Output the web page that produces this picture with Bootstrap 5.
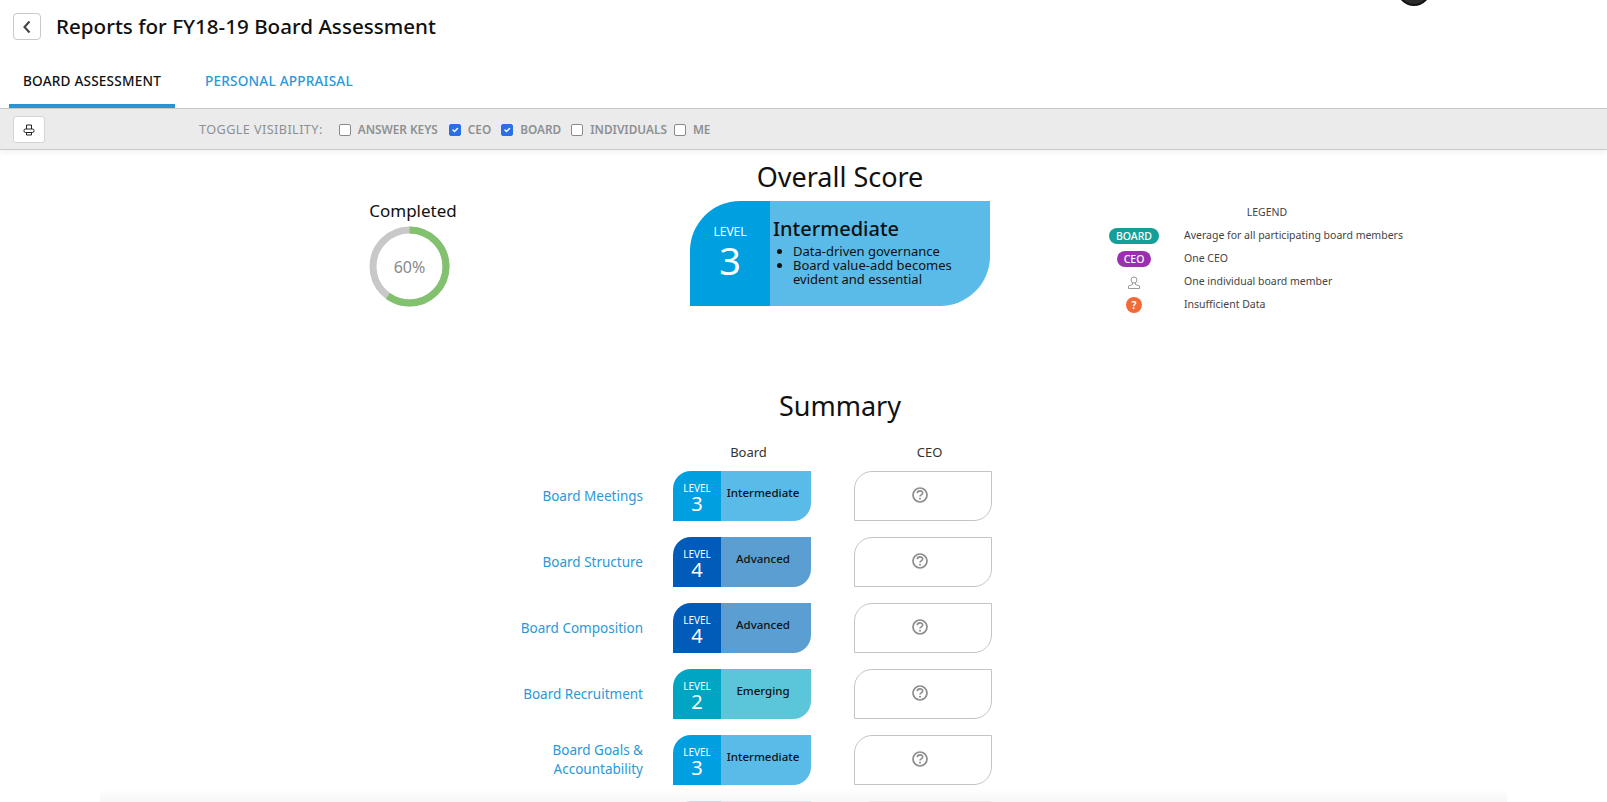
<!DOCTYPE html>
<html lang="en">
<head>
    <meta charset="UTF-8">
    <title>Reports for FY18-19 Board Assessment</title>
    <link href="https://cdn.jsdelivr.net/npm/bootstrap@5.3.0/dist/css/bootstrap.min.css" rel="stylesheet">
    <style>
        html, body { height: 802px; overflow: hidden; }
        body { font-family: "Noto Sans", "Liberation Sans", sans-serif; color: #111; background: #fff; }
        .page-head { height: 53px; padding: 13px 0 0 13px; }
        .back-btn { width: 28px; height: 27px; padding: 0; border: 1px solid #c9c9c9; border-radius: 4px; background: #fff; }
        .page-title { font-size: 20.6px; font-weight: 500; margin: 0 0 0 15px; line-height: 27px; }
        .avatar { width: 34px; height: 34px; margin: -41px 176px 0 auto; border-radius: 50%; background: #2c2c2c; border: 2px solid #111; }
        .tabs { height: 55px; padding-left: 9px; }
        .tabs .nav-link { height: 55px; padding: 18px 14px 0; font-size: 13.6px; font-weight: 500; letter-spacing: .2px; color: #2b98d8; border-bottom: 4px solid transparent; white-space: nowrap; }
        .tabs .nav-link.active { color: #111; border-bottom-color: #2b94d4; width: 166px; margin-right: 16px; padding-left: 0; padding-right: 0; }
        .toolbar { height: 42px; padding: 1px 0 0 13px; background: #ebebeb; border-top: 1px solid #c9c9c9; border-bottom: 1px solid #c9c9c9; box-shadow: 0 3px 6px rgba(0,0,0,.05); }
        .print-btn { width: 32px; height: 27px; padding: 0; border: 1px solid #d4d4d4; border-radius: 3px; background: #fff; }
        .toggle-label { margin-left: 154px; margin-right: 16px; font-size: 12.7px; letter-spacing: .4px; color: #8d9093; }
        .toolbar .form-check { min-height: 0; margin: 0 10px 0 0; padding: 0; display: flex; align-items: center; }
        .toolbar .form-check.gap-wide { margin-right: 11px; }
        .toolbar .form-check.gap-tight { margin-right: 7px; }
        .toolbar .form-check-input { float: none; width: 12px; height: 12px; margin: 0 7px 0 0; border-color: #8a8a8a; border-radius: 2px; }
        .toolbar .form-check-input:checked { background-color: #2a6fe8; border-color: #2a6fe8; }
        .toolbar .form-check-label { font-size: 11.8px; font-weight: 600; color: #8d9093; }
        .overview { height: 238px; }
        .section-title { font-size: 27px; font-weight: 400; line-height: 36px; text-align: center; margin: 0; }
        .summary-title { padding-left: 73px; }
        .completed { width: 100px; margin-left: 363px; padding-top: 48px; text-align: center; font-size: 17px; }
        .ring { display: block; width: 81px; height: 81px; margin: 2px 0 0 6px; }
        .overall { width: 300px; margin-left: 227px; padding-top: 9px; }
        .score { display: flex; height: 105px; margin-top: 6px; border-top-left-radius: 50px; border-bottom-right-radius: 50px; overflow: hidden; }
        .score-level { width: 80px; flex: none; padding-top: 24px; text-align: center; color: #fff; font-size: 12px; line-height: 14px; background: #009fdf; }
        .score-level b { display: block; font-size: 38px; font-weight: 400; line-height: 42px; }
        .score-body { flex: 1; padding: 16px 10px 0 3px; font-size: 13px; line-height: 14px; background: #5abae8; }
        .score-body h3 { font-size: 20px; font-weight: 500; line-height: 24px; margin: 0 0 3px; }
        .score-body ul { margin: 0; padding-left: 20px; }
        .legend { width: 360px; margin-left: 78px; padding-top: 55px; font-size: 10.5px; color: #444; }
        .legend-title { width: 330px; text-align: center; padding-left: 68px; margin-bottom: 4px; }
        .legend-row { display: flex; align-items: center; height: 23px; }
        .legend-mark { width: 116px; padding-left: 16px; text-align: center; flex: none; }
        .legend .badge { font-size: 10.5px; font-weight: 500; padding: 3px 7px; }
        .text-bg-board { background: #14a098; color: #fff; }
        .text-bg-ceo { background: #9c2fb0; color: #fff; }
        .unknown { display: inline-block; width: 16px; height: 16px; line-height: 16px; border-radius: 50%; background: #f26a36; color: #fff; font-weight: 700; font-size: 10.5px; }
        .head-row { display: flex; font-size: 13px; color: #333; line-height: 20px; margin: 18px 0 9px; }
        .summary-row { display: flex; align-items: center; height: 50px; margin-bottom: 16px; }
        .summary-row.peek { height: 1px; margin: 0; align-items: flex-start; overflow: hidden; }
        .row-label { width: 643px; flex: none; text-align: right; font-size: 13.5px; line-height: 19px; color: #2b98d8; text-decoration: none; }
        .badge-cell { width: 138px; margin-left: 30px; flex: none; }
        .badge-cell + .badge-cell { margin-left: 43px; }
        .col-head { text-align: center; padding-left: 13px; }
        .level-badge { display: flex; height: 50px; border-top-left-radius: 18px; border-bottom-right-radius: 18px; overflow: hidden; }
        .level-num { width: 48px; flex: none; padding-top: 11px; text-align: center; color: #fff; font-size: 10px; line-height: 12px; }
        .level-num b { display: block; font-size: 20px; font-weight: 400; line-height: 20px; }
        .level-name { flex: 1; padding: 13px 6px 0 0; text-align: center; font-size: 11.5px; font-weight: 500; line-height: 17px; color: #111; }
        .no-data { display: flex; align-items: center; justify-content: center; height: 50px; border: 1px solid #c4c4c4; border-top-left-radius: 18px; border-bottom-right-radius: 18px; padding: 0 7px 2px 0; }
        .lvl-2 .level-num { background: #00a5c4; } .lvl-2 .level-name { background: #5bc6da; }
        .lvl-3 .level-num { background: #009fdf; } .lvl-3 .level-name { background: #5abae8; }
        .lvl-4 .level-num { background: #005cb8; } .lvl-4 .level-name { background: #5b9ed1; }
        .foot-fade { position: fixed; left: 100px; right: 100px; bottom: 0; height: 14px; background: linear-gradient(rgba(245,245,245,0), rgba(245,245,245,.8)); pointer-events: none; }
    </style>
</head>
<body>
<svg class="d-none">
    <symbol id="q" viewBox="0 0 16 16"><circle cx="8" cy="8" r="7" fill="none" stroke="#8c8c8c" stroke-width="1.700"/><path d="M5.300 6.200c0-3.100 5.400-3.100 5.400-.1 0 1.900-2.700 1.700-2.700 3.500" fill="none" stroke="#8c8c8c" stroke-width="1.600"/><circle cx="8" cy="11.800" r="1" fill="#8c8c8c"/></symbol>
</svg>

<div class="page-head d-flex align-items-start">
    <button class="back-btn d-flex align-items-center justify-content-center" type="button" aria-label="Back">
        <svg width="10" height="14" viewBox="0 0 10 14"><path d="M7.500 1.500 2.500 7l5 5.500" fill="none" stroke="#444" stroke-width="2.100"/></svg>
    </button>
    <h1 class="page-title">Reports for FY18-19 Board Assessment</h1>
    <div class="avatar"></div>
</div>

<nav class="nav tabs">
    <a class="nav-link active text-center" href="#">BOARD ASSESSMENT</a>
    <a class="nav-link" href="#">PERSONAL APPRAISAL</a>
</nav>

<div class="toolbar d-flex align-items-center">
    <button class="print-btn d-flex align-items-center justify-content-center" type="button" aria-label="Print">
        <svg width="12" height="12" viewBox="0 0 12 12" fill="none" stroke="#222" stroke-width="1"><path d="M3.500 5V1h5v4"/><rect x="1" y="5" width="10" height="3.500" rx="1.500"/><path d="M3.500 8v3h5V8"/></svg>
    </button>
    <span class="toggle-label">TOGGLE VISIBILITY:</span>
    <div class="form-check gap-wide"><input class="form-check-input" type="checkbox" id="c1"><label class="form-check-label" for="c1">ANSWER KEYS</label></div>
    <div class="form-check"><input class="form-check-input" type="checkbox" id="c2" checked><label class="form-check-label" for="c2">CEO</label></div>
    <div class="form-check"><input class="form-check-input" type="checkbox" id="c3" checked><label class="form-check-label" for="c3">BOARD</label></div>
    <div class="form-check gap-tight"><input class="form-check-input" type="checkbox" id="c4"><label class="form-check-label" for="c4">INDIVIDUALS</label></div>
    <div class="form-check"><input class="form-check-input" type="checkbox" id="c5"><label class="form-check-label" for="c5">ME</label></div>
</div>

<div class="overview d-flex align-items-start">
    <div class="completed">
        Completed
        <svg class="ring" viewBox="0 0 81 81">
            <circle cx="40.500" cy="40.500" r="36.500" fill="none" stroke="#c8c8c8" stroke-width="7"/>
            <circle cx="40.500" cy="40.500" r="36.500" fill="none" stroke="#82c26e" stroke-width="7" stroke-dasharray="137.600 229.300" transform="rotate(-90 40.500 40.500)"/>
            <text x="40.500" y="47" text-anchor="middle" font-size="16" fill="#8a8a8a">60%</text>
        </svg>
    </div>
    <div class="overall">
        <h2 class="section-title">Overall Score</h2>
        <div class="score">
            <div class="score-level">LEVEL<b>3</b></div>
            <div class="score-body">
                <h3>Intermediate</h3>
                <ul>
                    <li>Data-driven governance</li>
                    <li>Board value-add becomes evident and essential</li>
                </ul>
            </div>
        </div>
    </div>
    <div class="legend">
        <div class="legend-title">LEGEND</div>
        <div class="legend-row"><span class="legend-mark"><span class="badge rounded-pill text-bg-board">BOARD</span></span>Average for all participating board members</div>
        <div class="legend-row"><span class="legend-mark"><span class="badge rounded-pill text-bg-ceo">CEO</span></span>One CEO</div>
        <div class="legend-row"><span class="legend-mark"><svg width="14" height="14" viewBox="0 0 14 14" fill="none" stroke="#999" stroke-width="1"><circle cx="7" cy="4" r="3"/><path d="M5.500 7v1.500L1.500 10v2.500h11V10l-4-1.500V7"/></svg></span>One individual board member</div>
        <div class="legend-row"><span class="legend-mark"><span class="unknown">?</span></span>Insufficient Data</div>
    </div>
</div>

<h2 class="section-title summary-title">Summary</h2>
<div class="head-row">
    <div class="row-label"></div>
    <div class="badge-cell col-head">Board</div>
    <div class="badge-cell col-head">CEO</div>
</div>

<div class="summary-row">
    <a class="row-label" href="#">Board Meetings</a>
    <div class="badge-cell"><div class="level-badge lvl-3"><div class="level-num">LEVEL<b>3</b></div><div class="level-name">Intermediate</div></div></div>
    <div class="badge-cell"><div class="no-data"><svg width="16" height="16"><use href="#q"/></svg></div></div>
</div>
<div class="summary-row">
    <a class="row-label" href="#">Board Structure</a>
    <div class="badge-cell"><div class="level-badge lvl-4"><div class="level-num">LEVEL<b>4</b></div><div class="level-name">Advanced</div></div></div>
    <div class="badge-cell"><div class="no-data"><svg width="16" height="16"><use href="#q"/></svg></div></div>
</div>
<div class="summary-row">
    <a class="row-label" href="#">Board Composition</a>
    <div class="badge-cell"><div class="level-badge lvl-4"><div class="level-num">LEVEL<b>4</b></div><div class="level-name">Advanced</div></div></div>
    <div class="badge-cell"><div class="no-data"><svg width="16" height="16"><use href="#q"/></svg></div></div>
</div>
<div class="summary-row">
    <a class="row-label" href="#">Board Recruitment</a>
    <div class="badge-cell"><div class="level-badge lvl-2"><div class="level-num">LEVEL<b>2</b></div><div class="level-name">Emerging</div></div></div>
    <div class="badge-cell"><div class="no-data"><svg width="16" height="16"><use href="#q"/></svg></div></div>
</div>
<div class="summary-row">
    <a class="row-label" href="#">Board Goals &amp;<br>Accountability</a>
    <div class="badge-cell"><div class="level-badge lvl-3"><div class="level-num">LEVEL<b>3</b></div><div class="level-name">Intermediate</div></div></div>
    <div class="badge-cell"><div class="no-data"><svg width="16" height="16"><use href="#q"/></svg></div></div>
</div>
<div class="summary-row peek">
    <div class="row-label"></div>
    <div class="badge-cell"><div class="level-badge lvl-2"><div class="level-num"></div><div class="level-name"></div></div></div>
    <div class="badge-cell"><div class="no-data"></div></div>
</div>
<div class="foot-fade"></div>

<script src="https://cdn.jsdelivr.net/npm/bootstrap@5.3.0/dist/js/bootstrap.bundle.min.js"></script>
</body>
</html>
